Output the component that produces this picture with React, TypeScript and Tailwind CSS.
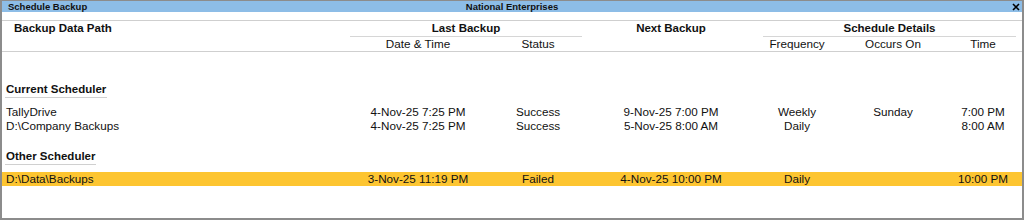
import React from "react";

// Column grid shared by header and rows (starts right after the 2px left border).
const COLS = "grid grid-cols-[348px_136px_104px_162px_90px_102px_78px]";

type Row = {
  path: string;
  lastAt: string;
  status: string;
  nextAt: string;
  freq: string;
  occurs: string;
  time: string;
};

const current: Row[] = [
  {
    path: "TallyDrive",
    lastAt: "4-Nov-25 7:25 PM",
    status: "Success",
    nextAt: "9-Nov-25 7:00 PM",
    freq: "Weekly",
    occurs: "Sunday",
    time: "7:00 PM",
  },
  {
    path: "D:\\Company Backups",
    lastAt: "4-Nov-25 7:25 PM",
    status: "Success",
    nextAt: "5-Nov-25 8:00 AM",
    freq: "Daily",
    occurs: "",
    time: "8:00 AM",
  },
];

const other: Row[] = [
  {
    path: "D:\\Data\\Backups",
    lastAt: "3-Nov-25 11:19 PM",
    status: "Failed",
    nextAt: "4-Nov-25 10:00 PM",
    freq: "Daily",
    occurs: "",
    time: "10:00 PM",
  },
];

function SectionTitle({ children }: { children: React.ReactNode }) {
  return (
    <div className="flex h-[16px] items-start pl-[3px]">
      <span className="block h-[16px] border-b border-[#d0d0d0] px-[1px] text-[11.5px] font-bold leading-[15px]">
        {children}
      </span>
    </div>
  );
}

function BackupRow({ row, selected }: { row: Row; selected?: boolean }) {
  return (
    <div className={`${COLS} h-[14px] text-[11.7px] leading-[14px] ${selected ? "bg-[#fdc531]" : ""}`}>
      <span className="pl-[4px]">{row.path}</span>
      <span className="text-center">{row.lastAt}</span>
      <span className="text-center">{row.status}</span>
      <span className="text-center">{row.nextAt}</span>
      <span className="text-center">{row.freq}</span>
      <span className="text-center">{row.occurs}</span>
      <span className="text-center">{row.time}</span>
    </div>
  );
}

export default function App() {
  return (
    <div className="h-[221px] w-[1024px] bg-white font-['Liberation_Sans',Arial,sans-serif] text-[#111]">
      <div className="flex h-[220px] flex-col border-x-2 border-t border-b-2 border-[#8c8c8c]">
        {/* title bar */}
        <div className="relative flex h-[11px] items-center bg-[#8dbde7] text-[9.5px] font-bold leading-[11px]">
          <span className="pl-[6px]">Schedule Backup</span>
          <span className="absolute left-1/2 -translate-x-1/2">National Enterprises</span>
          <svg
            className="absolute right-[2px] top-[2px]"
            width="8"
            height="8"
            viewBox="0 0 8 8"
          >
            <path d="M1 1L7 7M7 1L1 7" stroke="#000" strokeWidth="1.6" />
          </svg>
        </div>

        <div className="h-[8px]" />

        {/* column headings */}
        <div className="border-y border-[#cfcfcf]">
          <div className={`${COLS} h-[16px] text-[11.5px] font-bold leading-[15px]`}>
            <span className="row-span-2 pl-[12px]">Backup Data Path</span>
            <span className="col-span-2 mr-[8px] border-b border-[#d6d6d6] text-center">Last Backup</span>
            <span className="text-center">Next Backup</span>
            <span className="col-span-3 ml-[11px] mr-[6px] border-b border-[#d6d6d6] text-center">
              Schedule Details
            </span>
          </div>
          <div className={`${COLS} h-[14px] text-[11.7px] leading-[14px]`}>
            <span />
            <span className="text-center">Date &amp; Time</span>
            <span className="text-center">Status</span>
            <span />
            <span className="text-center">Frequency</span>
            <span className="text-center">Occurs On</span>
            <span className="text-center">Time</span>
          </div>
        </div>

        <div className="h-[30px]" />
        <SectionTitle>Current Scheduler</SectionTitle>
        <div className="h-[7px]" />
        {current.map((r) => (
          <BackupRow key={r.path} row={r} />
        ))}

        <div className="h-[16px]" />
        <SectionTitle>Other Scheduler</SectionTitle>
        <div className="h-[7px]" />
        {other.map((r) => (
          <BackupRow key={r.path} row={r} selected />
        ))}
      </div>
    </div>
  );
}
